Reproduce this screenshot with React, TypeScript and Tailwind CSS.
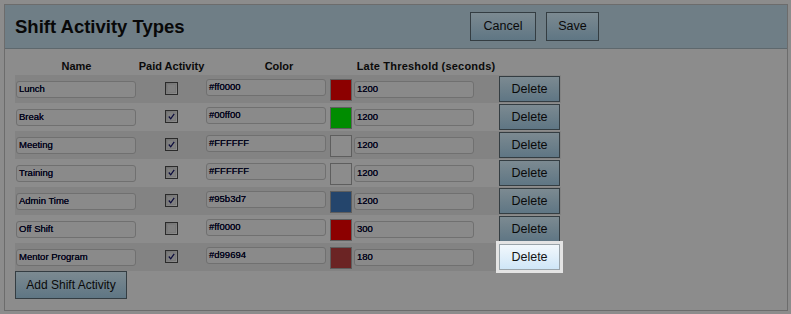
import React from "react";

const rows = [
	{ name: "Lunch", paid: false, color: "#ff0000", swatch: "#8c0000", late: "1200" },
	{ name: "Break", paid: true, color: "#00ff00", swatch: "#008c00", late: "1200" },
	{ name: "Meeting", paid: true, color: "#FFFFFF", swatch: "#8c8c8c", late: "1200" },
	{ name: "Training", paid: true, color: "#FFFFFF", swatch: "#8c8c8c", late: "1200" },
	{ name: "Admin Time", paid: true, color: "#95b3d7", swatch: "#24456c", late: "1200" },
	{ name: "Off Shift", paid: false, color: "#ff0000", swatch: "#8c0000", late: "300" },
	{ name: "Mentor Program", paid: true, color: "#d99694", swatch: "#6b2424", late: "180" },
];

const btn =
	"border border-[#343d42] bg-gradient-to-b from-[#7c8a91] to-[#5f7684] text-[#0a0a0a] text-[12.5px] leading-none";

function Field({ value }: { value: string }) {
	return (
		<div className="w-[120px] h-[17px] rounded-[3px] border border-[#707070] bg-[#8a8a8a] px-[2px] text-[9.5px] leading-[14px] text-[#03031a] [text-shadow:0_0_0.4px_#03031a]">
			{value}
		</div>
	);
}

function Check({ on }: { on: boolean }) {
	return (
		<div className="w-[13px] h-[13px] border border-[#2b2b2b] bg-gradient-to-br from-[#6e6e6e] to-[#8e8e8e] p-[1px]">
			<div className="w-full h-full border border-[#7a7a7a] bg-[#808080] flex items-center justify-center">
				{on && (
					<svg width="9" height="9" viewBox="0 0 9 9">
						<path d="M1 4.5 L3.5 7.5 L8 1" fill="none" stroke="#0c0c3c" strokeWidth="1.6" />
					</svg>
				)}
			</div>
		</div>
	);
}

export default function App() {
	return (
		<div
			className="w-[791px] h-[314px] bg-[#8c8c8c] p-[4px] overflow-hidden"
			style={{ fontFamily: '"Liberation Sans", Arial, sans-serif' }}
		>
			<div className="w-[784px] h-[307px] border border-[#6c6c6c]">
				<div className="h-[44px] bg-[#6f7e86] border-b border-[#5e686d] flex items-center pl-[10px] pr-[188px]">
					<h1 className="text-[18.5px] font-bold text-[#080808] flex-1 pt-[1px]">Shift Activity Types</h1>
					<button className={btn + " w-[66px] h-[29px]"}>Cancel</button>
					<button className={btn + " w-[53px] h-[29px] ml-[10px]"}>Save</button>
				</div>

				<div className="pl-[10px]">
					<div className="flex items-end h-[26px] pb-[2px] text-[11px] font-bold leading-[13px] text-[#0a0a0a] whitespace-nowrap">
						<div className="w-[123px] text-center">Name</div>
						<div className="w-[67px] text-center">Paid Activity</div>
						<div className="w-[148px] text-center">Color</div>
						<div className="w-[146px] text-center tracking-[0.2px]">Late Threshold (seconds)</div>
					</div>

					{rows.map((r, i) => (
						<div
							key={r.name}
							className={
								"flex items-start h-[28px] w-[546px] " + (i % 2 === 0 ? "bg-[#838383]" : "")
							}
						>
							<div className="w-[123px] pl-[1px] pt-[6px]">
								<Field value={r.name} />
							</div>
							<div className="w-[67px] flex justify-center pt-[7px]">
								<Check on={r.paid} />
							</div>
							<div className="w-[148px] flex pl-[1px] pt-[4px]">
								<Field value={r.color} />
								<div
									className="ml-[4px] w-[22px] h-[22px] border border-[#5e5e5e]"
									style={{ background: r.swatch }}
								/>
							</div>
							<div className="w-[146px] pl-[1px] pt-[6px]">
								<Field value={r.late} />
							</div>
							<div className="pt-[1px]">
								{i === rows.length - 1 ? (
									<button className="w-[61px] h-[26px] border border-[#9aa4aa] bg-gradient-to-b from-[#f2f8fc] to-[#cfe6f7] text-[12.5px] leading-none text-[#141414] shadow-[0_0_0_3px_#e4e4e4]">
										Delete
									</button>
								) : (
									<button className={btn + " w-[61px] h-[26px]"}>Delete</button>
								)}
							</div>
						</div>
					))}

					<button className={btn + " w-[112px] h-[28px] text-[12px]"}>Add Shift Activity</button>
				</div>
			</div>
		</div>
	);
}
